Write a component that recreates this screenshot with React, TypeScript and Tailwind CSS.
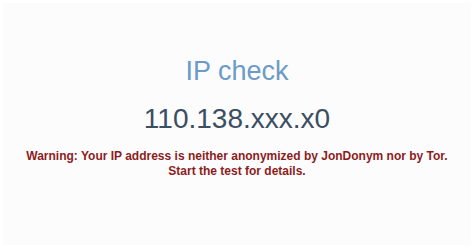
export default function App() {
  return (
    <div className="h-[248px] w-[474px] bg-white p-[3px]" style={{ fontFamily: '"Liberation Sans", Arial, sans-serif' }}>
      <div className="flex h-full flex-col items-center bg-[#fcfcfc] pt-[53px] text-center">
        <h1 className="text-[27px] leading-[31px] font-normal text-[#6b9bc6]">IP check</h1>
        <p className="mt-[16px] text-[28px] leading-[31px] text-[#3b4e62]">110.138.xxx.x0</p>
        <p className="mt-[15px] text-[12px] leading-[15px] font-bold text-[#8c1c1c]">
          Warning: Your IP address is neither anonymized by JonDonym nor by Tor.
          <br />
          Start the test for details.
        </p>
      </div>
    </div>
  );
}
